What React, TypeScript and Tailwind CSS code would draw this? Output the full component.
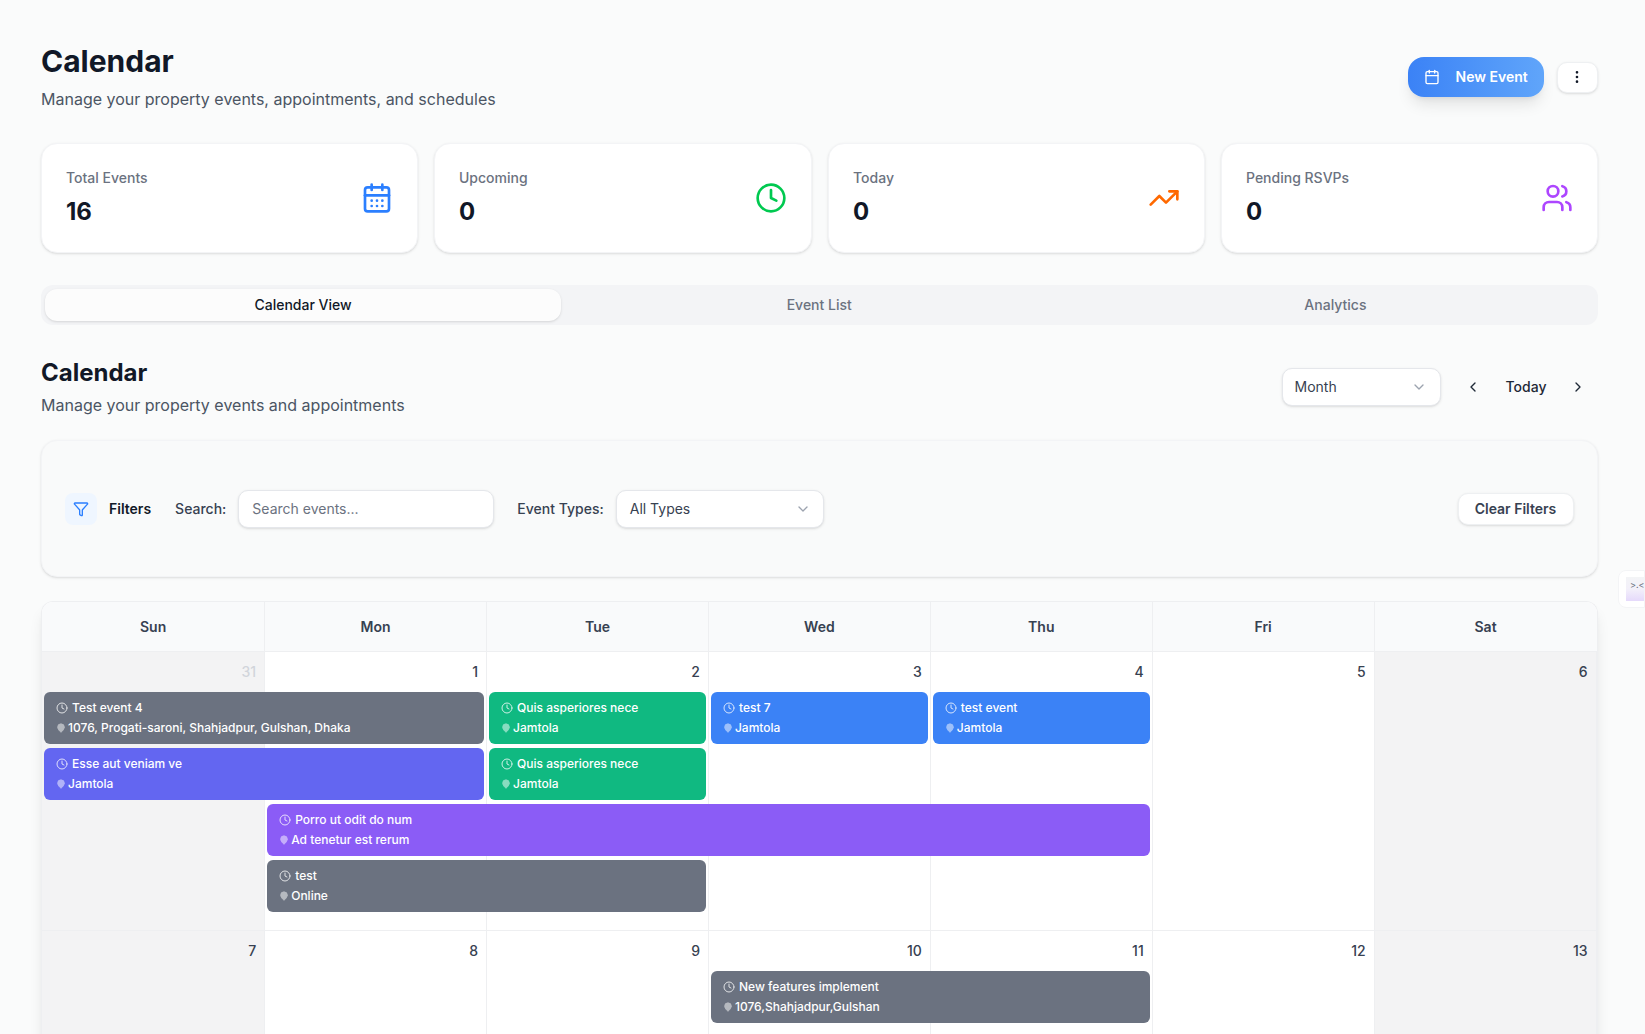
import React from 'react';
import { Calendar, CalendarDays, ChevronDown, ChevronLeft, ChevronRight, Clock, EllipsisVertical, Filter, MapPin, TrendingUp, Users } from 'lucide-react';

const stats = [
  { label: 'Total Events', value: '16', icon: <CalendarDays className="w-8 h-8 text-[#2b7fff]" /> },
  { label: 'Upcoming', value: '0', icon: <Clock className="w-8 h-8 text-[#00c950]" /> },
  { label: 'Today', value: '0', icon: <TrendingUp className="w-8 h-8 text-[#ff6900]" /> },
  { label: 'Pending RSVPs', value: '0', icon: <Users className="w-8 h-8 text-[#ad46ff]" /> },
];

const weekDays = ['Sun', 'Mon', 'Tue', 'Wed', 'Thu', 'Fri', 'Sat'];
const colStart = ['col-start-1', 'col-start-2', 'col-start-3', 'col-start-4', 'col-start-5', 'col-start-6', 'col-start-7'];

const weekOne = [
  { title: 'Test event 4', place: '1076, Progati-saroni, Shahjadpur, Gulshan, Dhaka', cls: 'col-start-1 col-span-2 row-start-2 bg-[#6b7280]' },
  { title: 'Quis asperiores nece', place: 'Jamtola', cls: 'col-start-3 col-span-1 row-start-2 bg-[#10b981]' },
  { title: 'test 7', place: 'Jamtola', cls: 'col-start-4 col-span-1 row-start-2 bg-[#3b82f6]' },
  { title: 'test event', place: 'Jamtola', cls: 'col-start-5 col-span-1 row-start-2 bg-[#3b82f6]' },
  { title: 'Esse aut veniam ve', place: 'Jamtola', cls: 'col-start-1 col-span-2 row-start-3 bg-[#6366f1]' },
  { title: 'Quis asperiores nece', place: 'Jamtola', cls: 'col-start-3 col-span-1 row-start-3 bg-[#10b981]' },
  { title: 'Porro ut odit do num', place: 'Ad tenetur est rerum', cls: 'col-start-2 col-span-4 row-start-4 bg-[#8b5cf6]' },
  { title: 'test', place: 'Online', cls: 'col-start-2 col-span-2 row-start-5 bg-[#6b7280]' },
];

const weekTwo = [
  { title: 'New features implement', place: '1076,Shahjadpur,Gulshan', cls: 'col-start-4 col-span-2 row-start-2 bg-[#6b7280]' },
];

type EventItem = { title: string; place: string; cls: string };

const EventBar = ({ event }: { event: EventItem }) => (
  <div className={`${event.cls} ml-[2px] mr-[3px] h-[52px] rounded-md px-3 py-2 text-xs font-medium text-white z-10`}>
    <div className="flex items-center gap-1 h-4">
      <Clock className="w-3 h-3 opacity-80" />
      <span>{event.title}</span>
    </div>
    <div className="flex items-center gap-0.5 h-4 mt-1">
      <MapPin className="w-2.5 h-2.5 opacity-50" fill="currentColor" />
      <span>{event.place}</span>
    </div>
  </div>
);

const WeekRow = ({ days, events, rows }: { days: { n: number; muted?: boolean }[]; events: EventItem[]; rows: string }) => (
  <div className={`grid grid-cols-[223.2px_repeat(6,1fr)] ${rows} border-b border-[#eeeff1]`}>
    {days.map((day, i) => (
      <div
        key={day.n}
        className={`${colStart[i]} row-start-1 row-end-7 border-r border-[#eeeff1] last:border-r-0 pt-[10px] pr-2 text-right text-sm font-medium ${
          i === 0 || i === 6 ? 'bg-[#f3f3f4]' : 'bg-white'
        } ${day.muted ? 'text-[#d1d5db]' : 'text-[#374151]'}`}
      >
        {day.n}
      </div>
    ))}
    {events.map((event) => (
      <EventBar key={event.title + event.cls} event={event} />
    ))}
  </div>
);

export default function App() {
  return (
    <div className="h-screen overflow-hidden bg-[#fafbfb] pl-[41px] pr-[47.5px] pt-[43px] [font-family:Inter,sans-serif] text-[#111827]">
      {/* page header */}
      <div className="flex items-center justify-between">
        <div>
          <h1 className="text-3xl font-bold">Calendar</h1>
          <p className="mt-2 text-base text-[#4b5563]">Manage your property events, appointments, and schedules</p>
        </div>
        <div className="flex items-center gap-[13px]">
          <button className="flex items-center gap-4 h-10 w-[136px] pl-4 rounded-2xl bg-gradient-to-r from-[#3b82f6] to-[#60a5fa] text-sm font-semibold text-white shadow-lg">
            <Calendar className="w-4 h-4" />
            New Event
          </button>
          <button className="flex items-center justify-center w-[41px] h-[31px] rounded-[10px] bg-white border border-[#eef0f2] shadow-sm">
            <EllipsisVertical className="w-4 h-4 text-[#111827]" />
          </button>
        </div>
      </div>

      {/* stats */}
      <div className="grid grid-cols-[377px_378px_377px_1fr] gap-4 mt-8">
        {stats.map((s) => (
          <div key={s.label} className="flex items-center justify-between rounded-2xl bg-white border border-[#f3f4f6] shadow-sm p-6">
            <div>
              <p className="text-sm font-medium text-[#6b7280]">{s.label}</p>
              <p className="mt-2 text-2xl font-bold">{s.value}</p>
            </div>
            {s.icon}
          </div>
        ))}
      </div>

      {/* tabs */}
      <div className="grid grid-cols-3 mt-8 h-10 p-1 rounded-xl bg-[#f3f4f6] text-sm font-medium text-[#6b7280]">
        <div className="flex items-center justify-center rounded-xl bg-[#fcfcfc] text-[#111827] shadow-sm">Calendar View</div>
        <div className="flex items-center justify-center">Event List</div>
        <div className="flex items-center justify-center">Analytics</div>
      </div>

      {/* section header */}
      <div className="flex items-center justify-between mt-8">
        <div>
          <h2 className="text-2xl font-bold">Calendar</h2>
          <p className="mt-1 text-base text-[#4b5563]">Manage your property events and appointments</p>
        </div>
        <div className="flex items-center">
          <div className="flex items-center justify-between w-[159px] h-[38px] pl-3 pr-[13px] rounded-[10px] bg-white border border-[#e5e7eb] shadow-sm text-sm text-[#374151]">
            Month
            <ChevronDown className="w-4 h-4 text-[#9ca3af]" />
          </div>
          <div className="flex items-center ml-6 text-sm font-medium text-[#1f2937]">
            <ChevronLeft className="w-4 h-4" />
            <span className="ml-[25px] mr-[23px]">Today</span>
            <ChevronRight className="w-4 h-4" />
            <span className="w-3" />
          </div>
        </div>
      </div>

      {/* filters */}
      <div className="flex items-center justify-between mt-[23px] h-[137px] pl-[23px] pr-[23px] rounded-2xl bg-[#f9fafa] border border-[#f3f4f6] shadow-sm">
        <div className="flex items-center text-sm text-[#374151]">
          <span className="flex items-center justify-center w-8 h-8 rounded-lg bg-[#eff6ff]">
            <Filter className="w-4 h-4 text-[#2b7fff]" />
          </span>
          <span className="ml-3 font-semibold text-[#111827]">Filters</span>
          <span className="ml-6 font-medium">Search:</span>
          <input
            readOnly
            placeholder="Search events..."
            className="ml-3 w-64 h-[38px] pl-[13px] pr-3 rounded-[10px] bg-white border border-[#e5e7eb] shadow-sm text-sm placeholder:text-[#6b7280]"
          />
          <span className="ml-[23px] font-medium">Event Types:</span>
          <div className="flex items-center justify-between ml-3 w-52 h-[38px] pl-[13px] pr-3 rounded-[10px] bg-white border border-[#e5e7eb] shadow-sm">
            All Types
            <ChevronDown className="w-4 h-4 text-[#9ca3af]" />
          </div>
        </div>
        <button className="w-[116px] h-8 rounded-[10px] bg-white border border-[#eef0f2] shadow-sm text-sm font-semibold text-[#374151]">Clear Filters</button>
      </div>

      {/* calendar grid */}
      <div className="mt-6 rounded-xl overflow-hidden border-t border-x border-[#eeeff1] shadow-lg bg-white">
        <div className="grid grid-cols-[223.2px_repeat(6,1fr)] h-[50px] bg-[#f9fafb] border-b border-[#eeeff1]">
          {weekDays.map((d) => (
            <div key={d} className="flex items-center justify-center border-r border-[#eeeff1] last:border-r-0 text-sm font-semibold text-[#374151]">
              {d}
            </div>
          ))}
        </div>
        <WeekRow
          rows="grid-rows-[40px_56px_56px_56px_56px_14px]"
          days={[{ n: 31, muted: true }, { n: 1 }, { n: 2 }, { n: 3 }, { n: 4 }, { n: 5 }, { n: 6 }]}
          events={weekOne}
        />
        <WeekRow
          rows="grid-rows-[40px_56px_56px_56px_56px_14px]"
          days={[{ n: 7 }, { n: 8 }, { n: 9 }, { n: 10 }, { n: 11 }, { n: 12 }, { n: 13 }]}
          events={weekTwo}
        />
      </div>

      {/* floating widget on the right edge */}
      <div className="fixed right-0 top-[570px] w-[27px] h-[38px] pl-[7px] pt-[6px] rounded-l-lg bg-white border border-[#f3f4f6] overflow-hidden">
        <div className="w-full h-6 pl-1 bg-gradient-to-b from-[#f3f4f6] via-[#f3f0fa] to-[#e5d9fb] text-[9px] leading-4 text-[#6b7280] whitespace-nowrap">&gt;.&lt;</div>
      </div>
    </div>
  );
}
